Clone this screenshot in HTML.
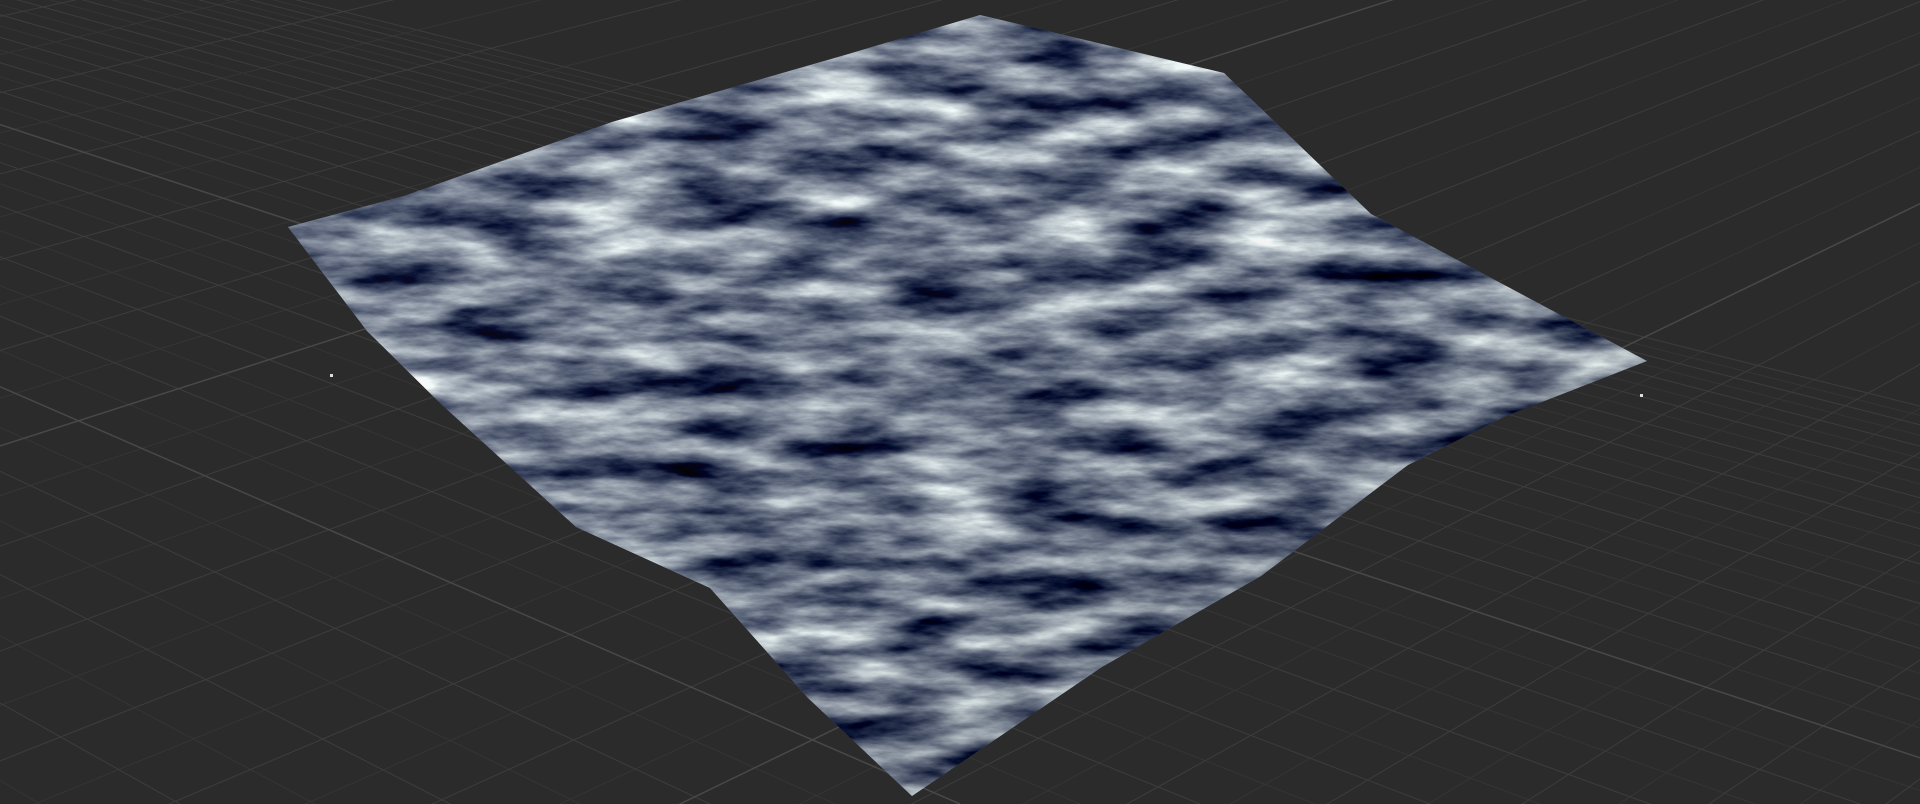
<!DOCTYPE html>
<html><head><meta charset="utf-8"><style>
html,body{margin:0;padding:0;background:#2a2a2a;width:1920px;height:804px;overflow:hidden}
svg{display:block;position:absolute;left:0;top:0}
</style></head><body>
<svg width="1920" height="804" viewBox="0 0 1920 804" xmlns="http://www.w3.org/2000/svg">
<defs>
<filter id="terr" x="0" y="0" width="1920" height="804" filterUnits="userSpaceOnUse" color-interpolation-filters="sRGB">
<feTurbulence type="fractalNoise" baseFrequency="0.009 0.035" numOctaves="6" seed="7" result="n"/>
<feColorMatrix in="n" type="matrix" values="
 1.7 0 0 0 -0.43
 1.7 0 0 0 -0.39
 1.45 0 0 0 -0.19
 0 0 0 0 1" result="c"/>
<feComposite in="c" in2="SourceGraphic" operator="in"/>
</filter>
<linearGradient id="shade" x1="0" y1="0" x2="1" y2="1">
<stop offset="0" stop-color="#fff" stop-opacity="0.05"/>
<stop offset="0.6" stop-color="#000" stop-opacity="0.05"/>
<stop offset="1" stop-color="#000" stop-opacity="0.2"/>
</linearGradient>
</defs>
<rect width="1920" height="804" fill="#2b2b2b"/>
<g stroke="#353535" stroke-width="1" fill="none">
<path d="M-200 100 L4200 -900 M-200 182 L4200 -900 M-200 270 L4200 -900 M-200 362 L4200 -900 M-200 460 L4200 -900 M-200 562 L4200 -900 M-200 670 L4200 -900 M-200 782 L4200 -900 M-200 900 L4200 -900 M-200 1025 L4200 -900 M-200 1160 L4200 -900 M-200 1305 L4200 -900 M-200 1460 L4200 -900 M-200 1625 L4200 -900 M-200 1805 L4200 -900 M-200 2005 L4200 -900 M-200 2225 L4200 -900 M-200 2470 L4200 -900 M-200 2750 L4200 -900 M-200 3075 L4200 -900"/>
<path d="M-2500 -700 L-250 804 M-2500 -700 L40 804 M-2500 -700 L315 804 M-2500 -700 L580 804 M-2500 -700 L835 804 M-2500 -700 L1080 804 M-2500 -700 L1315 804 M-2500 -700 L1540 804 M-2500 -700 L1755 804 M-2500 -700 L1960 804 M-2500 -700 L2155 804 M-2500 -700 L2340 804 M-2500 -700 L2515 804 M-2500 -700 L2680 804 M-2500 -700 L2835 804 M-2500 -700 L2980 804 M-2500 -700 L3115 804 M-2500 -700 L3240 804 M-2500 -700 L3355 804 M-2500 -700 L3460 804"/>
</g>
<g stroke="#3d3d3d" stroke-width="1" fill="none">
<path d="M-200 60 L4200 -900 M-200 140 L4200 -900 M-200 225 L4200 -900 M-200 315 L4200 -900 M-200 410 L4200 -900 M-200 510 L4200 -900 M-200 615 L4200 -900 M-200 725 L4200 -900 M-200 840 L4200 -900 M-200 960 L4200 -900 M-200 1090 L4200 -900 M-200 1230 L4200 -900 M-200 1380 L4200 -900 M-200 1540 L4200 -900 M-200 1710 L4200 -900 M-200 1900 L4200 -900 M-200 2110 L4200 -900 M-200 2340 L4200 -900 M-200 2600 L4200 -900 M-200 2900 L4200 -900 M-200 3250 L4200 -900"/>
<path d="M-2500 -700 L-400 804 M-2500 -700 L-100 804 M-2500 -700 L180 804 M-2500 -700 L450 804 M-2500 -700 L710 804 M-2500 -700 L960 804 M-2500 -700 L1200 804 M-2500 -700 L1430 804 M-2500 -700 L1650 804 M-2500 -700 L1860 804 M-2500 -700 L2060 804 M-2500 -700 L2250 804 M-2500 -700 L2430 804 M-2500 -700 L2600 804 M-2500 -700 L2760 804 M-2500 -700 L2910 804 M-2500 -700 L3050 804 M-2500 -700 L3180 804 M-2500 -700 L3300 804 M-2500 -700 L3410 804 M-2500 -700 L3510 804"/>
</g>
<g stroke="#484848" stroke-width="1.5" fill="none">
<path d="M-200 510 L4200 -900 M-200 1230 L4200 -900 M-2500 -700 L960 804 M-2500 -700 L2060 804"/>
</g>
<polygon points="288,227 404,196 612,122 845,55 980,15 1224,73 1371,214 1647,361 1506,416 1408,465 1261,576 1102,667 912,796 808,698 710,588 576,527 441,404 367,331" fill="#4a5a72"/>
<polygon points="288,227 404,196 612,122 845,55 980,15 1224,73 1371,214 1647,361 1506,416 1408,465 1261,576 1102,667 912,796 808,698 710,588 576,527 441,404 367,331" fill="#fff" filter="url(#terr)"/>
<polygon points="288,227 404,196 612,122 845,55 980,15 1224,73 1371,214 1647,361 1506,416 1408,465 1261,576 1102,667 912,796 808,698 710,588 576,527 441,404 367,331" fill="url(#shade)"/>
<g fill="#ddd"><rect x="330" y="374" width="3" height="3"/><rect x="1640" y="394" width="3" height="3"/></g>
</svg>
</body></html>
